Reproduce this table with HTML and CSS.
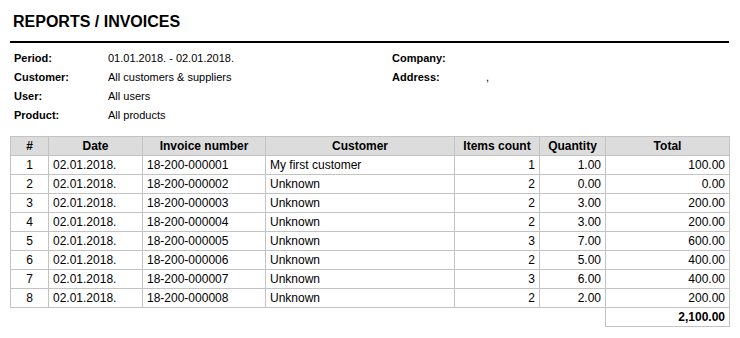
FILE: index.html
```html
<!DOCTYPE html>
<html>
<head>
<meta charset="utf-8">
<link rel="stylesheet" href="styles.css">
</head>
<body>
<div class="page">
  <h1 class="title">REPORTS / INVOICES</h1>
  <div class="rule"></div>
  <div class="info">
    <div class="col">
      <div class="row"><span class="lbl">Period:</span><span class="val">01.01.2018. - 02.01.2018.</span></div>
      <div class="row"><span class="lbl">Customer:</span><span class="val">All customers &amp; suppliers</span></div>
      <div class="row"><span class="lbl">User:</span><span class="val">All users</span></div>
      <div class="row"><span class="lbl">Product:</span><span class="val">All products</span></div>
    </div>
    <div class="col col2">
      <div class="row"><span class="lbl">Company:</span><span class="val"></span></div>
      <div class="row"><span class="lbl">Address:</span><span class="val comma">,</span></div>
    </div>
  </div>
  <table class="grid">
    <colgroup>
      <col class="c1"><col class="c2"><col class="c3"><col class="c4"><col class="c5"><col class="c6"><col class="c7">
    </colgroup>
    <thead>
      <tr><th>#</th><th>Date</th><th>Invoice number</th><th>Customer</th><th>Items count</th><th>Quantity</th><th>Total</th></tr>
    </thead>
    <tbody>
      <tr><td class="ctr">1</td><td>02.01.2018.</td><td>18-200-000001</td><td>My first customer</td><td class="num">1</td><td class="num">1.00</td><td class="num">100.00</td></tr>
      <tr><td class="ctr">2</td><td>02.01.2018.</td><td>18-200-000002</td><td>Unknown</td><td class="num">2</td><td class="num">0.00</td><td class="num">0.00</td></tr>
      <tr><td class="ctr">3</td><td>02.01.2018.</td><td>18-200-000003</td><td>Unknown</td><td class="num">2</td><td class="num">3.00</td><td class="num">200.00</td></tr>
      <tr><td class="ctr">4</td><td>02.01.2018.</td><td>18-200-000004</td><td>Unknown</td><td class="num">2</td><td class="num">3.00</td><td class="num">200.00</td></tr>
      <tr><td class="ctr">5</td><td>02.01.2018.</td><td>18-200-000005</td><td>Unknown</td><td class="num">3</td><td class="num">7.00</td><td class="num">600.00</td></tr>
      <tr><td class="ctr">6</td><td>02.01.2018.</td><td>18-200-000006</td><td>Unknown</td><td class="num">2</td><td class="num">5.00</td><td class="num">400.00</td></tr>
      <tr><td class="ctr">7</td><td>02.01.2018.</td><td>18-200-000007</td><td>Unknown</td><td class="num">3</td><td class="num">6.00</td><td class="num">400.00</td></tr>
      <tr><td class="ctr">8</td><td>02.01.2018.</td><td>18-200-000008</td><td>Unknown</td><td class="num">2</td><td class="num">2.00</td><td class="num">200.00</td></tr>
      <tr class="sum"><td class="blank" colspan="6"></td><td class="num total">2,100.00</td></tr>
    </tbody>
  </table>
</div>
</body>
</html>
```
FILE: styles.css
```css
html, body {
  margin: 0;
  padding: 0;
  background: #ffffff;
}
.page {
  padding: 10px 11px 0 10px;
  width: 719px;
  color: #000;
}
.title {
  margin: 0 0 0 3px;
  font-family: "Liberation Sans", Arial, sans-serif;
  font-weight: bold;
  font-size: 16px;
  line-height: 24px;
}
.rule {
  margin-top: 7px;
  height: 2px;
  background: #000;
}
.info {
  display: flex;
  padding: 6px 0 0 4px;
  height: 87px;
  font-family: "Liberation Sans", Arial, sans-serif;
  font-size: 11px;
}
.col {
  display: flex;
  flex-direction: column;
}
.row {
  display: flex;
  height: 19px;
  line-height: 19px;
}
.col .lbl {
  width: 94px;
  font-weight: bold;
}
.col .val {
  width: 284px;
}
.col2 .lbl {
  width: 94px;
}
.col2 .val {
  width: 100px;
}
.grid {
  border-collapse: collapse;
  table-layout: fixed;
  width: 719px;
  font-family: "Liberation Sans", Arial, sans-serif;
  font-size: 12px;
  color: #000;
}
.c1 { width: 38px; }
.c2 { width: 94px; }
.c3 { width: 123px; }
.c4 { width: 189px; }
.c5 { width: 85px; }
.c6 { width: 66px; }
.c7 { width: 124px; }
.grid th, .grid td {
  border: 1px solid #c3c3c3;
  height: 18px;
  padding: 0 4px;
  line-height: 18px;
  white-space: nowrap;
  overflow: hidden;
}
.grid th {
  background: #dcdcdc;
  font-weight: bold;
  text-align: center;
}
.grid td.ctr { text-align: center; }
.grid td.num { text-align: right; }
.grid tr.sum td.blank {
  border: none;
  border-top: 1px solid #c3c3c3;
}
.grid td.total {
  font-weight: bold;
}
```
